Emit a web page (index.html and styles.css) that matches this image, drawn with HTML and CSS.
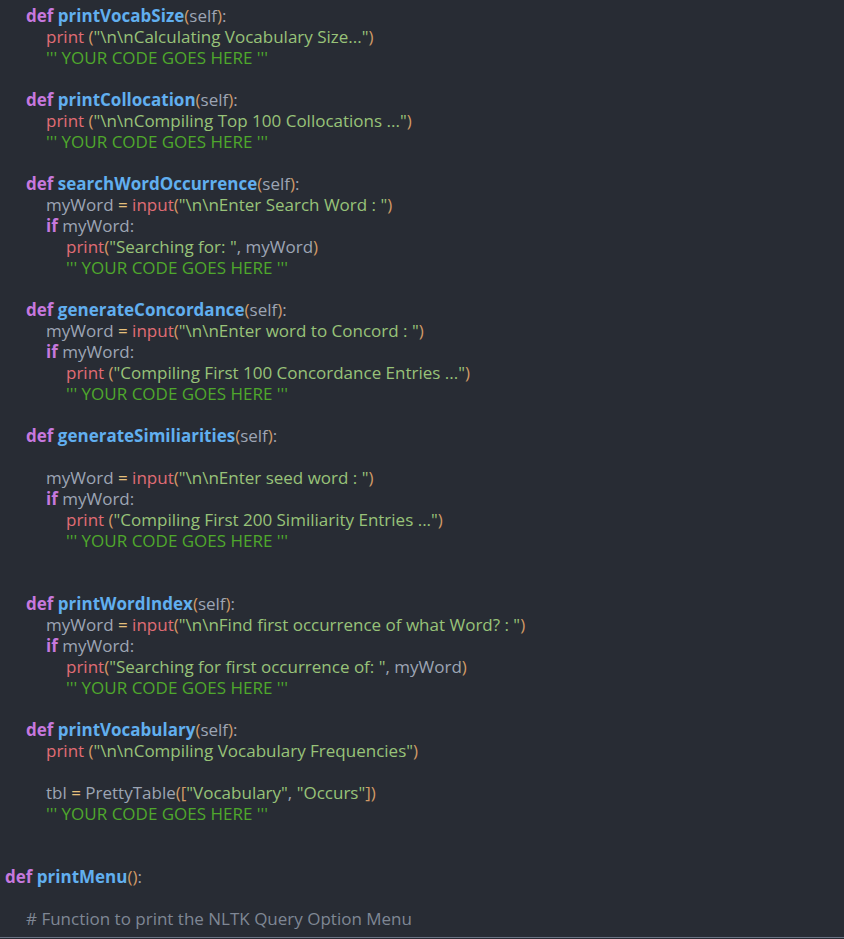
FILE: index.html
```html
<!DOCTYPE html>
<html lang="en">
<head>
    <meta charset="UTF-8">
    <meta name="viewport" content="width=device-width, initial-scale=1.0">
    <title>nltk query</title>
    <link rel="stylesheet" href="styles.css">
</head>
<body>
    <div id=editor>
        <div class="line i1"><span class=kw>def</span> <span class=fn>printVocabSize</span><span class=br>(</span><span class=id>self</span><span class=br>)</span><span class=id>:</span></div>
        <div class="line i2"><span class=call>print</span> <span class=br>(</span><span class=str>"\n\nCalculating Vocabulary Size..."</span><span class=br>)</span></div>
        <div class="line i2"><span class=doc>''' YOUR CODE GOES HERE '''</span></div>
        <div class=line></div>
        <div class="line i1"><span class=kw>def</span> <span class=fn>printCollocation</span><span class=br>(</span><span class=id>self</span><span class=br>)</span><span class=id>:</span></div>
        <div class="line i2"><span class=call>print</span> <span class=br>(</span><span class=str>"\n\nCompiling Top 100 Collocations ..."</span><span class=br>)</span></div>
        <div class="line i2"><span class=doc>''' YOUR CODE GOES HERE '''</span></div>
        <div class=line></div>
        <div class="line i1"><span class=kw>def</span> <span class=fn>searchWordOccurrence</span><span class=br>(</span><span class=id>self</span><span class=br>)</span><span class=id>:</span></div>
        <div class="line i2"><span class=id>myWord</span> <span class=op>=</span> <span class=call>input</span><span class=br>(</span><span class=str>"\n\nEnter Search Word : "</span><span class=br>)</span></div>
        <div class="line i2"><span class=kw>if</span> <span class=id>myWord:</span></div>
        <div class="line i3"><span class=call>print</span><span class=br>(</span><span class=str>"Searching for: "</span><span class=id>, myWord</span><span class=br>)</span></div>
        <div class="line i3"><span class=doc>''' YOUR CODE GOES HERE '''</span></div>
        <div class=line></div>
        <div class="line i1"><span class=kw>def</span> <span class=fn>generateConcordance</span><span class=br>(</span><span class=id>self</span><span class=br>)</span><span class=id>:</span></div>
        <div class="line i2"><span class=id>myWord</span> <span class=op>=</span> <span class=call>input</span><span class=br>(</span><span class=str>"\n\nEnter word to Concord : "</span><span class=br>)</span></div>
        <div class="line i2"><span class=kw>if</span> <span class=id>myWord:</span></div>
        <div class="line i3"><span class=call>print</span> <span class=br>(</span><span class=str>"Compiling First 100 Concordance Entries ..."</span><span class=br>)</span></div>
        <div class="line i3"><span class=doc>''' YOUR CODE GOES HERE '''</span></div>
        <div class=line></div>
        <div class="line i1"><span class=kw>def</span> <span class=fn>generateSimiliarities</span><span class=br>(</span><span class=id>self</span><span class=br>)</span><span class=id>:</span></div>
        <div class=line></div>
        <div class="line i2"><span class=id>myWord</span> <span class=op>=</span> <span class=call>input</span><span class=br>(</span><span class=str>"\n\nEnter seed word : "</span><span class=br>)</span></div>
        <div class="line i2"><span class=kw>if</span> <span class=id>myWord:</span></div>
        <div class="line i3"><span class=call>print</span> <span class=br>(</span><span class=str>"Compiling First 200 Similiarity Entries ..."</span><span class=br>)</span></div>
        <div class="line i3"><span class=doc>''' YOUR CODE GOES HERE '''</span></div>
        <div class=line></div>
        <div class=line></div>
        <div class="line i1"><span class=kw>def</span> <span class=fn>printWordIndex</span><span class=br>(</span><span class=id>self</span><span class=br>)</span><span class=id>:</span></div>
        <div class="line i2"><span class=id>myWord</span> <span class=op>=</span> <span class=call>input</span><span class=br>(</span><span class=str>"\n\nFind first occurrence of what Word? : "</span><span class=br>)</span></div>
        <div class="line i2"><span class=kw>if</span> <span class=id>myWord:</span></div>
        <div class="line i3"><span class=call>print</span><span class=br>(</span><span class=str>"Searching for first occurrence of: "</span><span class=id>, myWord</span><span class=br>)</span></div>
        <div class="line i3"><span class=doc>''' YOUR CODE GOES HERE '''</span></div>
        <div class=line></div>
        <div class="line i1"><span class=kw>def</span> <span class=fn>printVocabulary</span><span class=br>(</span><span class=id>self</span><span class=br>)</span><span class=id>:</span></div>
        <div class="line i2"><span class=call>print</span> <span class=br>(</span><span class=str>"\n\nCompiling Vocabulary Frequencies"</span><span class=br>)</span></div>
        <div class=line></div>
        <div class="line i2"><span class=id>tbl</span> <span class=op>=</span> <span class=id>PrettyTable</span><span class=br>([</span><span class=str>"Vocabulary"</span><span class=id>, </span><span class=str>"Occurs"</span><span class=br>])</span></div>
        <div class="line i2"><span class=doc>''' YOUR CODE GOES HERE '''</span></div>
        <div class=line></div>
        <div class=line></div>
        <div class="line i0"><span class=kw>def</span> <span class=fn>printMenu</span><span class=br>()</span><span class=id>:</span></div>
        <div class=line></div>
        <div class="line i1"><span class=cm># Function to print the NLTK Query Option Menu</span></div>
    </div>
</body>
</html>
```

FILE: styles.css
```css
html, body {
    margin: 0;
    height: 100%;
}
body {
    background: #282c34;
    overflow: hidden;
}
#editor {
    height: 938px;
    box-sizing: border-box;
    padding-top: 5px;
    border-bottom: 1px solid #6b7485;
    font-family: "Open Sans", "Noto Sans", sans-serif;
    font-size: 17px;
    color: #9da5b4;
}
.line {
    height: 21px;
    line-height: 21px;
    white-space: pre;
}
.i0 { padding-left: 5px; }
.i1 { padding-left: 26px; }
.i2 { padding-left: 46px; }
.i3 { padding-left: 66px; }

.kw { color: #c678dd; font-weight: bold; }
.fn { color: #61afef; font-weight: bold; }
.id { color: #9da5b4; }
.br { color: #d19a66; }
.op { color: #e5c07b; }
.call { color: #e06c75; }
.str { color: #98c379; }
.doc { color: #4fa82c; }
.cm { color: #7f8794; }
```
